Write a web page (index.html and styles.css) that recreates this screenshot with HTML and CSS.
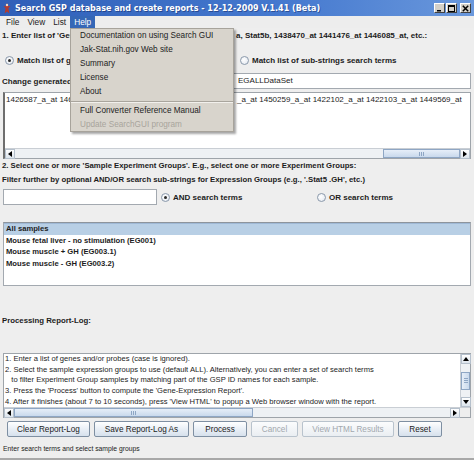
FILE: index.html
```html
<!DOCTYPE html>
<html>
<head>
<meta charset="utf-8">
<title>Search GSP</title>
<link rel="stylesheet" href="styles.css">
</head>
<body>
<div class="window">
  <div class="titlebar">
    <svg class="appicon" width="8" height="11" viewBox="0 0 8 11"><path d="M4 0 L5.2 3 L7.5 3.6 L5.4 5 L6.4 10.5 L4 8.4 L1.6 10.5 L2.6 5 L0.5 3.6 L2.8 3 Z" fill="#b23a2e"/><circle cx="4" cy="2" r="1.2" fill="#f3d9c0"/></svg>
    <span class="title">Search GSP database and create reports - 12-12-2009 V.1.41 (Beta)</span>
    <div class="wbtns">
      <span class="wbtn"><svg width="7" height="7" viewBox="0 0 7 7"><rect x="1" y="5" width="4" height="1.5" fill="#000"/></svg></span>
      <span class="wbtn"><svg width="7" height="7" viewBox="0 0 7 7"><rect x="0.5" y="0.5" width="6" height="6" fill="none" stroke="#000"/><rect x="0.5" y="0.5" width="6" height="1.5" fill="#000"/></svg></span>
      <span class="wbtn close"><svg width="7" height="7" viewBox="0 0 7 7"><path d="M0.8 0.8 L6.2 6.2 M6.2 0.8 L0.8 6.2" stroke="#000" stroke-width="1.5"/></svg></span>
    </div>
  </div>
  <div class="menubar">
    <span class="menu">File</span>
    <span class="menu">View</span>
    <span class="menu">List</span>
    <span class="menu active">Help</span>
  </div>
  <div class="content">
    <div class="lbl row1"><span class="under">1. Enter list of 'Genes' and/or 'Probes', e.g., Stat5</span><span>a, Stat5b, 1438470_at 1441476_at 1446085_at, etc.:</span></div>
    <div class="radios">
      <label class="radio"><span class="circle on"></span><span class="lbl">Match list of genes/probes exactly</span></label>
      <label class="radio"><span class="circle"></span><span class="lbl">Match list of sub-strings search terms</span></label>
    </div>
    <div class="suffix-row">
      <span class="lbl">Change generated file name suffix:</span>
      <div class="field suffix"><span>EGALLDataSet</span></div>
    </div>
    <div class="textarea">
      <div class="ta-text"><span class="under2">1426587_a_at 1460421_a_at 1451357_a_at 14</span><span>_a_at 1450259_a_at 1422102_a_at 1422103_a_at 1449569_at</span></div>
      <div class="hscroll">
        <span class="sbtn"><svg width="4" height="6" viewBox="0 0 4 6"><path d="M4 0 L0 3 L4 6 Z" fill="#000"/></svg></span>
        <div class="track end"><span class="thumb w77"><i></i><i></i><i></i></span></div>
        <span class="sbtn"><svg width="4" height="6" viewBox="0 0 4 6"><path d="M0 0 L4 3 L0 6 Z" fill="#000"/></svg></span>
      </div>
    </div>
    <div class="lbl line">2. Select one or more 'Sample Experiment Groups'. E.g., select one or more Experiment Groups:</div>
    <div class="lbl line">Filter further by optional AND/OR search sub-strings for Expression Groups (e.g., '.Stat5 .GH', etc.)</div>
    <div class="filter-row">
      <div class="field filter"></div>
      <label class="radio and"><span class="circle on"></span><span class="lbl">AND search terms</span></label>
      <label class="radio"><span class="circle"></span><span class="lbl">OR search terms</span></label>
    </div>
    <div class="list">
      <div class="item selected">All samples</div>
      <div class="item">Mouse fetal liver - no stimulation (EG001)</div>
      <div class="item">Mouse muscle + GH (EG003.1)</div>
      <div class="item">Mouse muscle - GH (EG003.2)</div>
    </div>
    <div class="lbl proc">Processing Report-Log:</div>
    <div class="log">
      <div class="log-main">
        <div class="log-text">
          <div>1. Enter a list of genes and/or probes (case is ignored).</div>
          <div>2. Select the sample expression groups to use (default ALL). Alternatively, you can enter a set of search terms</div>
          <div>&nbsp;&nbsp;&nbsp;to filter Experiment Group samples by matching part of the GSP ID names for each sample.</div>
          <div>3. Press the 'Process' button to compute the 'Gene-Expression Report'.</div>
          <div>4. After it finishes (about 7 to 10 seconds), press 'View HTML' to popup a Web browser window with the report.</div>
        </div>
        <div class="vscroll">
          <span class="sbtn v"><svg width="6" height="4" viewBox="0 0 6 4"><path d="M0 4 L3 0 L6 4 Z" fill="#000"/></svg></span>
          <div class="vtrack"><span class="vthumb"><i></i><i></i><i></i></span></div>
          <span class="sbtn v"><svg width="6" height="4" viewBox="0 0 6 4"><path d="M0 0 L3 4 L6 0 Z" fill="#000"/></svg></span>
        </div>
      </div>
      <div class="hscroll log-h">
        <span class="sbtn"><svg width="4" height="6" viewBox="0 0 4 6"><path d="M4 0 L0 3 L4 6 Z" fill="#000"/></svg></span>
        <div class="track"><span class="thumb w239"><i></i><i></i><i></i></span></div>
        <span class="sbtn"><svg width="4" height="6" viewBox="0 0 4 6"><path d="M0 0 L4 3 L0 6 Z" fill="#000"/></svg></span>
        <span class="corner"></span>
      </div>
    </div>
    <div class="buttons">
      <button class="btn b-clear">Clear Report-Log</button>
      <button class="btn b-save">Save Report-Log As</button>
      <button class="btn b-proc">Process</button>
      <button class="btn b-cancel" disabled>Cancel</button>
      <button class="btn b-view" disabled>View HTML Results</button>
      <button class="btn b-reset">Reset</button>
    </div>
    <div class="status">Enter search terms and select sample groups</div>
  </div>

  <div class="popup">
    <div class="mi">Documentation on using Search GUI</div>
    <div class="mi">Jak-Stat.nih.gov Web site</div>
    <div class="mi">Summary</div>
    <div class="mi">License</div>
    <div class="mi">About</div>
    <div class="sep"></div>
    <div class="mi">Full Converter Reference Manual</div>
    <div class="mi disabled">Update SearchGUI program</div>
  </div>
</div>
</body>
</html>
```
FILE: styles.css
```css
* { box-sizing: border-box; }
html, body { margin: 0; padding: 0; }
body {
  width: 474px;
  height: 460px;
  overflow: hidden;
  font-family: "Liberation Sans", Arial, sans-serif;
  color: #1c1c1c;
  background: #eeeeee;
}
.window {
  position: relative;
  width: 474px;
  height: 460px;
  display: flex;
  flex-direction: column;
  background: #eeeeee;
  border-bottom: 2px solid #a8a8a8;
}
.titlebar {
  height: 16px;
  flex: none;
  display: flex;
  align-items: center;
  padding: 0 3px 0 3px;
  background: linear-gradient(to right, #2f5fb8, #4579cf 60%, #6a98dc);
  color: #fff;
}
.appicon { flex: none; }
.title {
  margin-left: 4px;
  font-family: "DejaVu Sans", "Liberation Sans", sans-serif;
  font-weight: bold;
  font-size: 8px;
  white-space: nowrap;
  text-shadow: 1px 1px 0 rgba(0, 0, 40, 0.35);
}
.wbtns { margin-left: auto; display: flex; gap: 1px; }
.wbtn {
  width: 11px;
  height: 10px;
  background: #d4d0c8;
  border: 1px solid;
  border-color: #ffffff #404040 #404040 #ffffff;
  display: flex;
  align-items: center;
  justify-content: center;
}
.wbtn.close { margin-left: 2px; }
.menubar {
  height: 12px;
  flex: none;
  display: flex;
  align-items: stretch;
  padding-left: 2px;
  font-size: 8.3px;
  background: #ededed;
}
.menu { padding: 0 4px; line-height: 12px; }
.menu.active { background: #3567b6; color: #fff; }
.content {
  flex: 1;
  display: flex;
  flex-direction: column;
  padding: 0 3px 0 3px;
  min-height: 0;
}
.lbl {
  font-weight: bold;
  font-size: 8px;
  white-space: nowrap;
}
.row1 { height: 16px; line-height: 16px; display: flex; margin-left: -1px; overflow: hidden; }
.row1 .under { width: 234px; overflow: hidden; flex: none; }
.radios {
  margin-top: 8px;
  height: 16px;
  display: grid;
  grid-template-columns: 235px 1fr;
  align-items: center;
  padding-left: 2px;
}
.radio { display: flex; align-items: center; gap: 3px; }
.circle {
  width: 9px;
  height: 9px;
  border-radius: 50%;
  border: 1px solid #8b99ab;
  background: radial-gradient(circle at 40% 40%, #ffffff, #dfe5ee);
  position: relative;
  flex: none;
}
.circle.on::after {
  content: "";
  position: absolute;
  left: 2px; top: 2px;
  width: 3px; height: 3px;
  border-radius: 50%;
  background: #2a2a2a;
}
.suffix-row {
  margin-top: 5px;
  height: 16px;
  display: flex;
  align-items: center;
}
.suffix-row .lbl { margin-left: -1px; }
.field {
  height: 16px;
  background: #fff;
  border: 1px solid #a3a9b0;
  font-size: 8px;
  line-height: 14px;
  white-space: nowrap;
  overflow: hidden;
}
.field.suffix { margin-left: auto; width: 311px; padding-left: 77px; }
.textarea {
  margin-top: 3px;
  height: 67px;
  border: 1px solid #9ea4aa;
  border-left: 2px solid #6e6e6e;
  background: #fff;
  display: flex;
  flex-direction: column;
}
.ta-text {
  flex: 1;
  font-size: 8px;
  line-height: 11px;
  padding: 1px 0 0 1px;
  white-space: nowrap;
  overflow: hidden;
  display: flex;
}
.ta-text .under2 { width: 231px; overflow: hidden; flex: none; }
.hscroll {
  height: 10px;
  flex: none;
  display: flex;
  background: #eef1f4;
  border-top: 1px solid #c9ced4;
}
.sbtn {
  width: 10px;
  height: 10px;
  flex: none;
  display: flex;
  align-items: center;
  justify-content: center;
  background: linear-gradient(#ffffff, #dce4ec);
  border: 1px solid #b5c0cc;
}
.track { flex: 1; display: flex; justify-content: flex-start; }
.track.end { justify-content: flex-end; }
.thumb {
  height: 100%;
  background: linear-gradient(#e6eef8, #c9d9ec);
  border: 1px solid #8ea6c4;
  display: flex;
  align-items: center;
  justify-content: center;
  gap: 1px;
}
.thumb i { width: 1px; height: 4px; background: #8ea6c4; }
.w77 { width: 77px; }
.w239 { width: 239px; }
.line { height: 14px; line-height: 14px; margin-left: -1px; font-size: 7.75px; }
.filter-row {
  margin-top: 2px;
  height: 16px;
  display: flex;
  align-items: center;
}
.field.filter { width: 154px; flex: none; }
.radio.and { width: 156px; margin-left: 4px; flex: none; }
.list {
  margin-top: 17px;
  height: 64px;
  background: #fff;
  border: 1px solid #a3a9b0;
  border-top-color: #8d949c;
}
.item {
  height: 11.5px;
  line-height: 11.5px;
  font-weight: bold;
  font-size: 7.65px;
  padding-left: 2px;
  white-space: nowrap;
}
.item.selected { background: #b8cfe5; border-top: 1px solid #9fb9d6; line-height: 10px; }
.proc { margin-top: 28px; height: 14px; line-height: 14px; margin-left: -1px; font-size: 7.8px; }
.log {
  margin-top: 25px;
  height: 65px;
  border: 1px solid #9ea4aa;
  background: #fff;
  display: flex;
  flex-direction: column;
}
.log-main { flex: 1; display: flex; min-height: 0; }
.log-text {
  flex: 1;
  font-size: 7.6px;
  line-height: 10.7px;
  padding-left: 1px;
  white-space: nowrap;
  overflow: hidden;
}
.vscroll {
  width: 10px;
  flex: none;
  display: flex;
  flex-direction: column;
  background: #eef1f4;
  border-left: 1px solid #c9ced4;
}
.sbtn.v { width: 10px; height: 10px; }
.vtrack { flex: 1; display: flex; flex-direction: column; justify-content: center; }
.vthumb {
  height: 18px;
  background: linear-gradient(to right, #e6eef8, #c9d9ec);
  border: 1px solid #8ea6c4;
  display: flex;
  flex-direction: column;
  align-items: center;
  justify-content: center;
  gap: 1px;
}
.vthumb i { width: 4px; height: 1px; background: #8ea6c4; }
.corner { width: 10px; flex: none; background: #eeeeee; }
.buttons {
  margin-top: 3px;
  height: 16px;
  display: flex;
  gap: 4px;
  padding-left: 4px;
}
.btn {
  height: 16px;
  padding: 0;
  font-family: "Liberation Sans", Arial, sans-serif;
  font-size: 8.2px;
  color: #1c1c1c;
  background: linear-gradient(#ffffff, #e9eff6 50%, #d7e1ec);
  border: 1px solid #7e8fa2;
  border-radius: 2px;
}
.btn:disabled { color: #a2a8ae; border-color: #b9c3cd; background: linear-gradient(#fbfcfd, #eaeef2); }
.b-clear { width: 83px; }
.b-save { width: 95px; }
.b-proc { width: 54px; }
.b-cancel { width: 47px; }
.b-view { width: 92px; }
.b-reset { width: 44px; }
.status {
  margin-top: 6px;
  height: 12px;
  line-height: 12px;
  font-size: 6.8px;
  white-space: nowrap;
}
.popup {
  position: absolute;
  left: 70px;
  top: 28px;
  width: 164px;
  height: 104px;
  background: #d8d4cc;
  border: 1px solid #a7a39b;
  box-shadow: 2px 2px 2px rgba(0, 0, 0, 0.35);
}
.mi {
  height: 14px;
  line-height: 14px;
  padding-left: 9px;
  font-size: 8.2px;
  white-space: nowrap;
  color: #1c1c1c;
}
.mi.disabled { color: #a8a49c; }
.sep { border-top: 1px solid #a9a59d; border-bottom: 1px solid #f2f0ec; margin: 2px 0 1px; height: 2px; }
```
